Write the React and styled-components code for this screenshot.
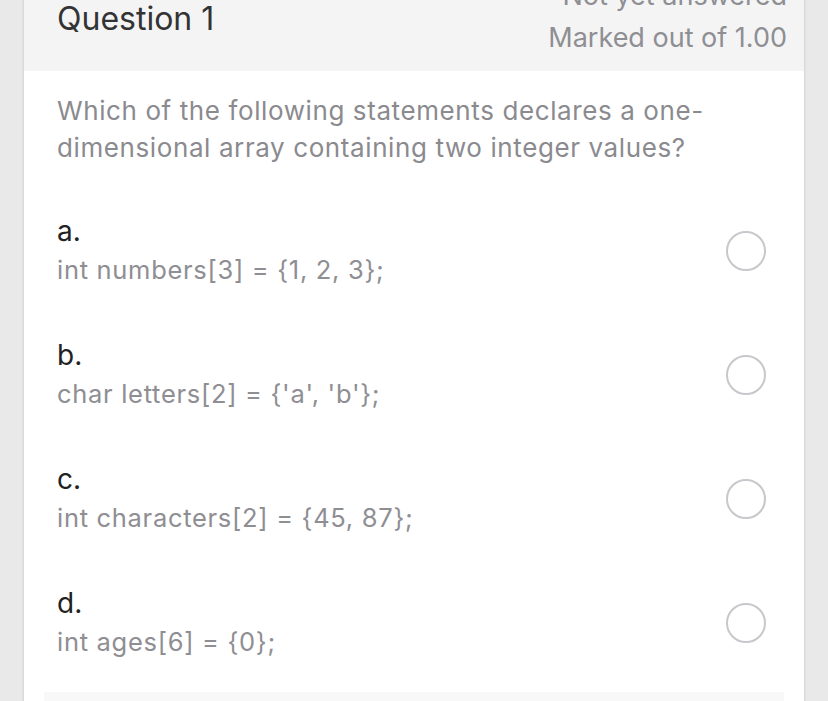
import React from 'react';
import styled, { createGlobalStyle } from 'styled-components';

const GlobalStyle = createGlobalStyle`
    html, body {
        margin: 0;
        padding: 0;
        background: #e9e9e9;
        font-family: Inter, "Noto Sans", "Liberation Sans", sans-serif;
        overflow: hidden;
    }
`;

const Page = styled.div`
    padding: 0 24px;
    margin-top: -43px;
`;

const Card = styled.div`
    background: #ffffff;
    box-shadow: 0 0 3px rgba(0, 0, 0, 0.18);
`;

const Header = styled.div`
    display: flex;
    justify-content: space-between;
    align-items: flex-start;
    background: #f4f4f4;
    padding: 18px 17px 12px 33px;
`;

const Title = styled.h2`
    margin: 0;
    padding-top: 26px;
    font-size: 32px;
    font-weight: 400;
    line-height: 36px;
    color: #333333;
    letter-spacing: 0;
`;

const Status = styled.div`
    display: flex;
    flex-direction: column;
    align-items: flex-end;
    font-size: 27px;
    line-height: 42px;
    color: #8e8e93;
    white-space: nowrap;
`;

const Body = styled.div`
    padding: 21px 38px 30px 33px;
`;

const QuestionText = styled.p`
    margin: 0 0 46px;
    font-size: 26px;
    line-height: 37px;
    color: #8a8a8f;
    letter-spacing: 0.6px;
`;

const Options = styled.div`
    display: flex;
    flex-direction: column;
    gap: 46px;
`;

const Option = styled.label`
    display: flex;
    align-items: center;
    justify-content: space-between;
`;

const OptionText = styled.div`
    display: flex;
    flex-direction: column;
`;

const Letter = styled.span`
    font-size: 28px;
    line-height: 38px;
    color: #222222;
`;

const Code = styled.span`
    font-size: 25.5px;
    line-height: 40px;
    color: #8e8e93;
    letter-spacing: 0.7px;
`;

const Radio = styled.span`
    width: 36px;
    height: 36px;
    border: 2px solid #c8c8cc;
    border-radius: 50%;
    flex-shrink: 0;
`;

const Footer = styled.div`
    margin: 0 20px;
    height: 40px;
    background: #f8f8f8;
`;

const options = [
    { letter: 'a.', code: 'int numbers[3] = {1, 2, 3};' },
    { letter: 'b.', code: "char letters[2] = {'a', 'b'};" },
    { letter: 'c.', code: 'int characters[2] = {45, 87};' },
    { letter: 'd.', code: 'int ages[6] = {0};' },
];

function App() {
    return (
        <>
            <GlobalStyle />
            <Page>
                <Card>
                    <Header>
                        <Title>Question 1</Title>
                        <Status>
                            <span>Not yet answered</span>
                            <span>Marked out of 1.00</span>
                        </Status>
                    </Header>
                    <Body>
                        <QuestionText>
                            Which of the following statements declares a one-
                            <br />
                            dimensional array containing two integer values?
                        </QuestionText>
                        <Options>
                            {options.map((o) => (
                                <Option key={o.letter}>
                                    <OptionText>
                                        <Letter>{o.letter}</Letter>
                                        <Code>{o.code}</Code>
                                    </OptionText>
                                    <Radio />
                                </Option>
                            ))}
                        </Options>
                    </Body>
                    <Footer />
                </Card>
            </Page>
        </>
    );
}

export default App;
